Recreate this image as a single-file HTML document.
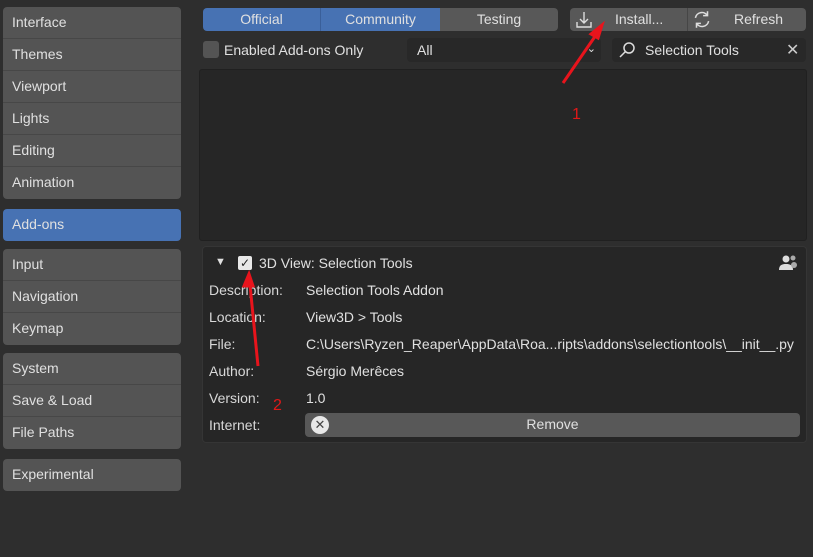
<html><head><style>
body{margin:0;width:813px;height:557px;background:#2e2e2e;font-family:"Liberation Sans","DejaVu Sans",sans-serif;font-size:14px;color:#e0e0e0;position:relative;overflow:hidden}
.a{position:absolute;box-sizing:border-box}
.grp{position:absolute;left:3px;width:178px;background:#545454;border-radius:4px;overflow:hidden}
.grp div{height:32px;line-height:30px;padding-left:9px;border-bottom:1px solid #474747;box-sizing:border-box}
.grp div:last-child{border-bottom:none}
.lab{position:absolute;left:209px;color:#d8d8d8}
.val{position:absolute;left:306px;color:#e0e0e0}
</style></head><body>
<div class="grp" style="top:7px"><div>Interface</div><div>Themes</div><div>Viewport</div><div>Lights</div><div>Editing</div><div>Animation</div></div>
<div class="grp" style="top:209px;background:#4772b3"><div>Add-ons</div></div>
<div class="grp" style="top:249px"><div>Input</div><div>Navigation</div><div>Keymap</div></div>
<div class="grp" style="top:353px"><div>System</div><div>Save &amp; Load</div><div>File Paths</div></div>
<div class="grp" style="top:459px"><div>Experimental</div></div>

<div class="a" style="left:203px;top:8px;width:355px;height:23px;border-radius:4px;overflow:hidden;display:flex;text-align:center;line-height:22px">
<div style="width:117px;background:#4772b3;border-right:1px solid #3a5f99">Official</div>
<div style="width:119px;background:#4772b3">Community</div>
<div style="flex:1;background:#585858">Testing</div></div>
<div class="a" style="left:570px;top:8px;width:236px;height:23px;border-radius:4px;background:#585858;overflow:hidden">
<div class="a" style="left:117px;top:0;width:1px;height:23px;background:#464646"></div>
<svg class="a" style="left:4px;top:2px" width="20" height="19" viewBox="0 0 20 19" fill="none" stroke="#ddd" stroke-width="1.4"><path d="M10 2v11M6 9l4 4 4-4M3 12v5h14v-5"/></svg>
<span class="a" style="left:45px;top:3px">Install...</span>
<svg class="a" style="left:121px;top:1px" width="22" height="21" viewBox="0 0 20 19" fill="none" stroke="#ddd" stroke-width="1.4"><path d="M4 8a6 6 0 0 1 11-2M16 11a6 6 0 0 1-11 2M15 2v4h-4M5 17v-4h4"/></svg>
<span class="a" style="left:164px;top:3px">Refresh</span></div>
<div class="a" style="left:203px;top:41px;width:16px;height:17px;border-radius:3px;background:#545454"></div>
<span class="a" style="left:224px;top:42px">Enabled Add-ons Only</span>
<div class="a" style="left:407px;top:38px;width:194px;height:24px;border-radius:4px;background:#282828;padding:4px 10px">All<span style="position:absolute;right:5px;top:4px;font-size:11px">⌄</span></div>
<div class="a" style="left:612px;top:38px;width:194px;height:24px;border-radius:4px;background:#282828"></div>
<svg class="a" style="left:617px;top:40px" width="20" height="20" viewBox="0 0 20 20" fill="none" stroke="#ddd" stroke-width="1.5"><circle cx="12" cy="8" r="5"/><path d="M8.5 11.5L3 17"/></svg>
<span class="a" style="left:645px;top:42px">Selection Tools</span>
<span class="a" style="left:786px;top:40px;font-size:16px;color:#ccc">✕</span>
<div class="a" style="left:199px;top:69px;width:608px;height:172px;background:#262626;border-radius:3px;border:1px solid #202020"></div>
<div class="a" style="left:202px;top:246px;width:605px;height:197px;background:#262626;border-radius:4px;border:1px solid #353535"></div>
<span class="a" style="left:215px;top:256px;font-size:11px">▼</span>
<div class="a" style="left:238px;top:256px;width:14px;height:14px;background:#e8e8e8;border-radius:2px;color:#222;font-size:12px;line-height:14px;text-align:center;font-weight:bold">✓</div>
<span class="a" style="left:259px;top:255px">3D View: Selection Tools</span>
<svg class="a" style="left:779px;top:254px" width="20" height="18" viewBox="0 0 20 18" fill="#ddd"><circle cx="7" cy="5" r="3.5"/><path d="M0 16c0-5 3-6 7-6s7 1 7 6z"/><circle cx="14" cy="4" r="2.5" fill="#aaa"/><circle cx="15" cy="11" r="3" fill="#aaa"/></svg>
<span class="lab" style="top:282px">Description:</span><span class="val" style="top:282px">Selection Tools Addon</span>
<span class="lab" style="top:309px">Location:</span><span class="val" style="top:309px">View3D &gt; Tools</span>
<span class="lab" style="top:336px">File:</span><span class="val" style="top:336px">C:\Users\Ryzen_Reaper\AppData\Roa...ripts\addons\selectiontools\__init__.py</span>
<span class="lab" style="top:363px">Author:</span><span class="val" style="top:363px">Sérgio Merêces</span>
<span class="lab" style="top:390px">Version:</span><span class="val" style="top:390px">1.0</span>
<span class="lab" style="top:417px">Internet:</span>
<div class="a" style="left:305px;top:413px;width:495px;height:24px;background:#585858;border-radius:4px;text-align:center;line-height:23px">Remove</div>
<div class="a" style="left:311px;top:416px;width:18px;height:18px;border-radius:50%;background:#e8e8e8;color:#444;font-size:13px;font-weight:bold;text-align:center;line-height:18px">✕</div>
<svg class="a" style="left:0;top:0" width="813" height="557"><g stroke="#e8141c" stroke-width="3" fill="#e8141c"><path d="M563 83L596 35" /><path d="M602 25l-11 9 7 4z"/><path d="M258 366L250 285"/><path d="M249 274l-5 12 9 0z"/></g>
<text x="572" y="119" fill="#e01818" font-size="16" font-family="Liberation Sans">1</text><text x="273" y="410" fill="#e01818" font-size="16" font-family="Liberation Sans">2</text></svg>
</body></html>
